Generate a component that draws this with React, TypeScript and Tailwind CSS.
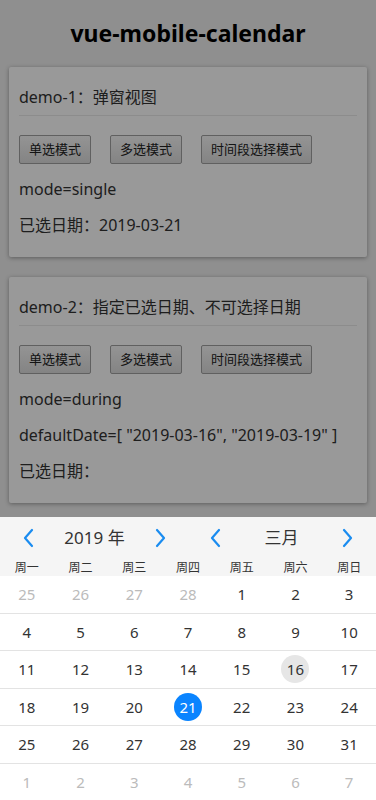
import React from "react";

const FONT = { fontFamily: '"Noto Sans", "Noto Sans CJK SC", sans-serif' };

function Btn({ children }: { children: React.ReactNode }) {
  return (
    <button className="h-[29px] px-[9px] text-[13px] leading-none text-[#222] border border-[#a0a0a0] rounded-[2px] bg-gradient-to-b from-[#f7f7f7] to-[#dcdcdc] whitespace-nowrap">
      {children}
    </button>
  );
}

function Card({ title, lines }: { title: string; lines: string[] }) {
  return (
    <div className="mx-[9px] bg-white rounded-[2px] shadow-[0_1px_4px_rgba(0,0,0,0.35)] px-[10px] pb-[22px]">
      <div className="pt-[20px] pb-[8px] border-b border-[#eaeaea] text-[16px] leading-[20px] text-[#333]">{title}</div>
      <div className="flex gap-[19px] mt-[19px]">
        <Btn>单选模式</Btn>
        <Btn>多选模式</Btn>
        <Btn>时间段选择模式</Btn>
      </div>
      <div className="flex flex-col gap-[16px] mt-[15px] text-[16px] leading-[20px] text-[#333]">
        {lines.map((l, i) => (
          <div key={i}>{l}</div>
        ))}
      </div>
    </div>
  );
}

function Chevron({ dir }: { dir: "l" | "r" }) {
  return (
    <svg width="12" height="20" viewBox="0 0 12 20" fill="none">
      <polyline
        points={dir === "l" ? "9,2 2,10 9,18" : "3,2 10,10 3,18"}
        stroke="#1a8cf0"
        strokeWidth="2.2"
        strokeLinecap="round"
        strokeLinejoin="round"
      />
    </svg>
  );
}

const weeks: { d: number; other?: boolean }[][] = [
  [{ d: 25, other: true }, { d: 26, other: true }, { d: 27, other: true }, { d: 28, other: true }, { d: 1 }, { d: 2 }, { d: 3 }],
  [4, 5, 6, 7, 8, 9, 10].map((d) => ({ d })),
  [11, 12, 13, 14, 15, 16, 17].map((d) => ({ d })),
  [18, 19, 20, 21, 22, 23, 24].map((d) => ({ d })),
  [25, 26, 27, 28, 29, 30, 31].map((d) => ({ d })),
  [1, 2, 3, 4, 5, 6, 7].map((d) => ({ d, other: true })),
];

export default function App() {
  return (
    <div style={FONT} className="min-h-[800px] bg-[#eeeeee]">
      <h1 className="h-[67px] flex items-center justify-center text-[23px] font-bold text-black">vue-mobile-calendar</h1>
      <Card title="demo-1：弹窗视图" lines={["mode=single", "已选日期：2019-03-21"]} />
      <div className="h-[20px]" />
      <Card
        title="demo-2：指定已选日期、不可选择日期"
        lines={["mode=during", 'defaultDate=[ "2019-03-16", "2019-03-19" ]', "已选日期："]}
      />

      <div className="fixed inset-0 bg-black/40" />

      <div className="fixed left-0 right-0 bottom-0 h-[283px] bg-white flex flex-col">
        <div className="bg-[#f5f5f5]">
          <div className="h-[42px] flex">
            <div className="w-1/2 flex items-center justify-between pl-[23px] pr-[22px]">
              <Chevron dir="l" />
              <span className="text-[17px] text-[#333]">2019 年</span>
              <Chevron dir="r" />
            </div>
            <div className="w-1/2 flex items-center justify-between pl-[22px] pr-[23px]">
              <Chevron dir="l" />
              <span className="text-[17px] text-[#333]">三月</span>
              <Chevron dir="r" />
            </div>
          </div>
          <div className="h-[17px] grid grid-cols-7 items-center text-[12px] leading-none text-[#333] text-center">
            {["周一", "周二", "周三", "周四", "周五", "周六", "周日"].map((w) => (
              <div key={w}>{w}</div>
            ))}
          </div>
        </div>
        <div className="flex-1 flex flex-col">
          {weeks.map((row, ri) => (
            <div key={ri} className={`flex-1 grid grid-cols-7 items-center ${ri > 0 ? "border-t border-[#e3e3e3]" : ""}`}>
              {row.map((c, ci) => {
                const sel = !c.other && c.d === 21;
                const dis = !c.other && c.d === 16;
                return (
                  <div key={ci} className="flex items-center justify-center">
                    <span
                      className={`w-[28px] h-[28px] rounded-full flex items-center justify-center text-[15px] ${
                        sel ? "bg-[#0a84ff] text-white" : dis ? "bg-[#e6e6e6] text-[#333]" : c.other ? "text-[#bbbbbb]" : "text-[#333]"
                      }`}
                    >
                      {c.d}
                    </span>
                  </div>
                );
              })}
            </div>
          ))}
        </div>
      </div>
    </div>
  );
}
